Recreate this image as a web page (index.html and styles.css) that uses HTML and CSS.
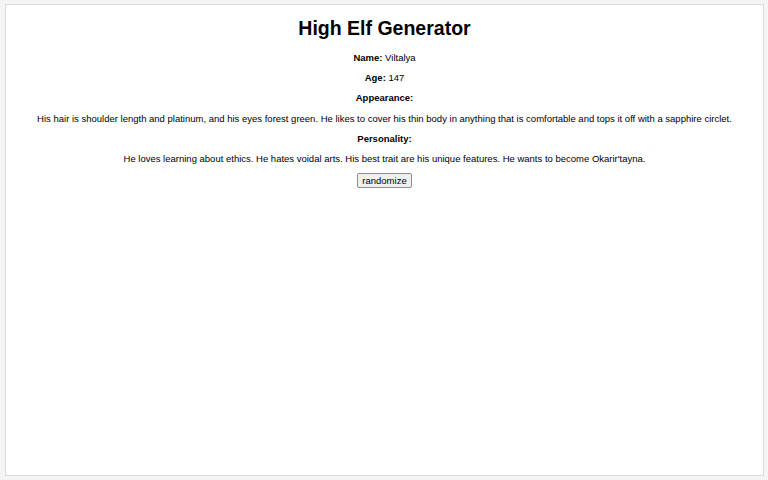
FILE: index.html
```html
<!DOCTYPE html>
<html lang="en">
<head>
    <meta charset="UTF-8">
    <meta name="viewport" content="width=device-width, initial-scale=1.0">
    <title>High Elf Generator</title>
    <link rel="stylesheet" href="styles.css">
</head>
<body>

    <!-- Generator card -->
    <div class="card">
        <h1>High Elf Generator</h1>
        <p><b>Name:</b> Viltalya</p>
        <p><b>Age:</b> 147</p>
        <p><b>Appearance:</b></p>
        <p>His hair is shoulder length and platinum, and his eyes forest green. He likes to cover his thin body in anything that is comfortable and tops it off with a sapphire circlet.</p>
        <p><b>Personality:</b></p>
        <p>He loves learning about ethics. He hates voidal arts. His best trait are his unique features. He wants to become Okarir'tayna.</p>
        <button class="button">randomize</button>
    </div>

</body>
</html>
```

FILE: styles.css
```css
html, body {
    height: 100%;
}
body {
    font-family: "Liberation Sans", Arial, sans-serif;
    background-color: #f4f4f4;
    margin: 0;
    padding: 4px 4px 4px 5px;
    box-sizing: border-box;
    display: flex;
}
.card {
    flex: 1;
    background: white;
    border: 1px solid #dcdcdc;
    text-align: center;
    font-size: 9.5px;
    color: #000;
}
h1 {
    font-size: 19.5px;
    margin: 12px 0;
}
p {
    margin: 9.2px 0;
}
.button {
    font-family: "Liberation Sans", Arial, sans-serif;
    font-size: 9.5px;
    padding: 1px 4px;
    background: #f0f0f0;
    border: 1px solid #8f8f8f;
    border-radius: 2px;
    color: #000;
}
```
